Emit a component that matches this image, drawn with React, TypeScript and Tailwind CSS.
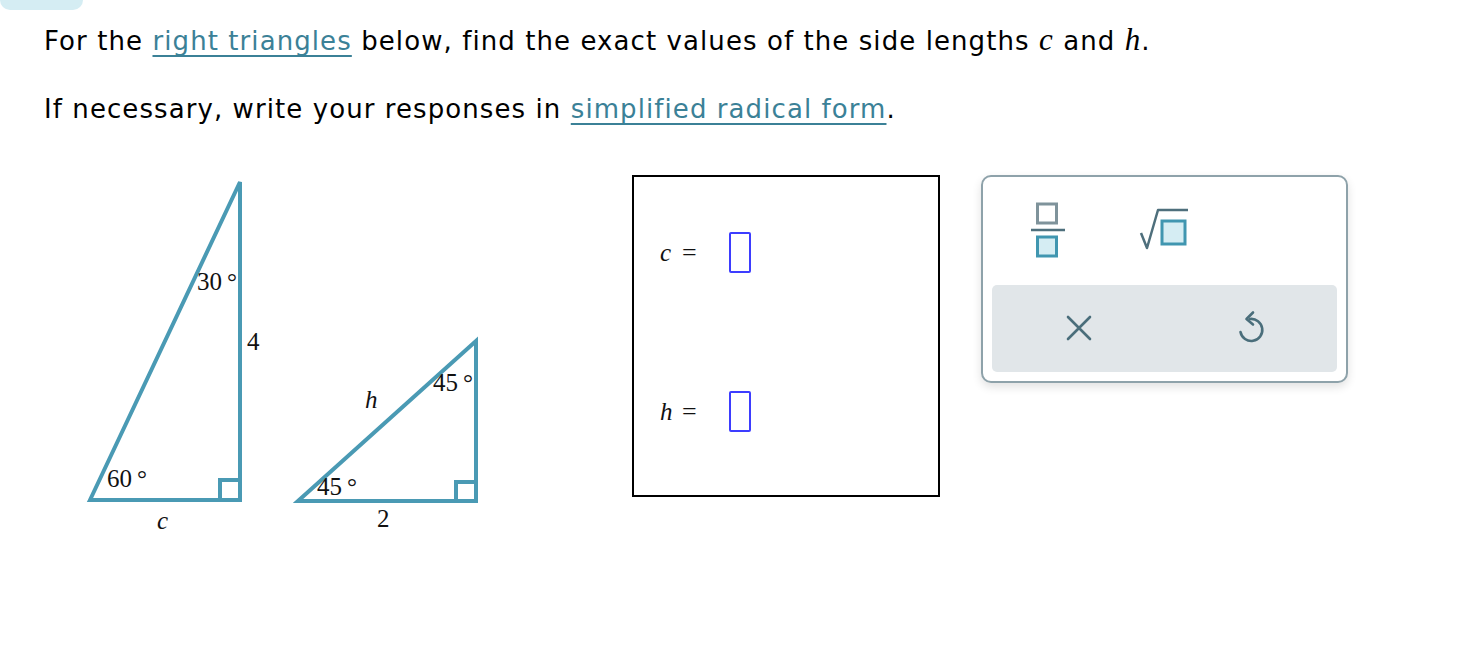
import React from "react";

const serif = { fontFamily: '"Liberation Serif", "Times New Roman", serif' };

const Triangles = () => (
  <svg width="420" height="370" viewBox="80 170 420 370" className="shrink-0">
    <g stroke="#4a9ab4" strokeWidth="4" fill="none" strokeLinejoin="miter">
      <polygon points="90,500 240,182 240,500" />
      <polyline points="220,500 220,480 240,480" />
      <polygon points="298,501 476,341 476,501" />
      <polyline points="456,501 456,482 476,482" />
    </g>
    <g fill="#111" fontSize="25" style={serif}>
      <text x="197" y="290">30{"\u2009"}°</text>
      <text x="247" y="350">4</text>
      <text x="107" y="487">60{"\u2009"}°</text>
      <text x="157" y="529" fontStyle="italic">c</text>
      <text x="365" y="408" fontStyle="italic">h</text>
      <text x="433" y="391">45{"\u2009"}°</text>
      <text x="317" y="495">45{"\u2009"}°</text>
      <text x="377" y="527">2</text>
    </g>
  </svg>
);

const AnswerRow = ({ v }: { v: string }) => (
  <div className="flex items-center h-[41px]">
    <span className="text-[25px] italic text-[#111] w-[13px]" style={serif}>
      {v}
    </span>
    <span className="text-[26px] text-[#111] ml-[9px]" style={serif}>
      =
    </span>
    <span className="ml-[32px] w-[22px] h-[41px] border-2 border-[#3d3dff] rounded-[2px]" />
  </div>
);

export default function App() {
  return (
    <div className="relative w-[1460px] h-[652px] bg-white text-black overflow-hidden" style={{ fontFamily: '"DejaVu Sans", Verdana, sans-serif' }}>
      <div className="w-[83px] h-[10px] rounded-b-[10px] bg-[#d5edf3]" />
      <div className="pl-[44px] pt-[12px] text-[26px] leading-[36px] tracking-[1.08px]">
        <p>
          For the{" "}
          <a href="#" className="text-[#3b8197] underline underline-offset-[5px] decoration-[1.5px]">
            right triangles
          </a>{" "}
          below, find the exact values of the side lengths{" "}
          <span className="italic text-[31px]" style={serif}>c</span> and{" "}
          <span className="italic text-[31px]" style={serif}>h</span>.
        </p>
        <p className="mt-[32px]">
          If necessary, write your responses in{" "}
          <a href="#" className="text-[#3b8197] underline underline-offset-[5px] decoration-[1.5px]">
            simplified radical form
          </a>
          .
        </p>
      </div>
      <div className="flex items-start mt-[43px] pl-[80px]">
        <Triangles />
        <div className="ml-[132px] mt-[5px] w-[308px] h-[322px] border-2 border-black pl-[26px] pt-[55px] flex flex-col gap-[118px]">
          <AnswerRow v="c" />
          <AnswerRow v="h" />
        </div>
        <div className="ml-[41px] mt-[5px] w-[367px] h-[208px] rounded-[10px] border-2 border-[#8ea2aa] bg-white shadow-[0_4px_10px_rgba(0,0,0,0.12)] p-[9px] flex flex-col">
          <div className="flex h-[99px] items-start pt-[16px]">
            <button className="ml-[38px] w-[36px] h-[58px]">
              <svg width="36" height="58" viewBox="0 0 36 58">
                <rect x="7.5" y="2" width="19" height="19" fill="none" stroke="#7f939b" strokeWidth="3" />
                <line x1="1" y1="28" x2="35" y2="28" stroke="#4e6f7c" strokeWidth="2.5" />
                <rect x="7.5" y="35" width="19" height="19" fill="#d5edf3" stroke="#4096b0" strokeWidth="3" />
              </svg>
            </button>
            <button className="ml-[72px] mt-[4px] w-[52px] h-[46px]">
              <svg width="52" height="46" viewBox="0 0 52 46">
                <polyline points="3,27 9,42 20,4 50,4" fill="none" stroke="#4e6f7c" strokeWidth="2.5" strokeLinejoin="round" />
                <rect x="24" y="15" width="23" height="23" fill="#d5edf3" stroke="#4096b0" strokeWidth="3" />
              </svg>
            </button>
          </div>
          <div className="flex h-[88px] rounded-[5px] bg-[#e1e6e9] items-center">
            <button className="ml-[74px] w-[26px] h-[26px] flex items-center justify-center">
              <svg width="26" height="26" viewBox="0 0 26 26">
                <path d="M2 2 L24 24 M24 2 L2 24" stroke="#4a6e7b" strokeWidth="2.6" strokeLinecap="round" />
              </svg>
            </button>
            <button className="ml-[145px] w-[30px] h-[36px] flex items-center justify-center">
              <svg width="30" height="36" viewBox="0 0 30 36">
                <path d="M13 9 A11 11 0 1 1 3.5 22" fill="none" stroke="#4a6e7b" strokeWidth="2.6" strokeLinecap="round" />
                <path d="M16 2.5 L9.5 9 L16 14.5" fill="none" stroke="#4a6e7b" strokeWidth="2.6" strokeLinecap="round" strokeLinejoin="round" />
              </svg>
            </button>
          </div>
        </div>
      </div>
    </div>
  );
}
